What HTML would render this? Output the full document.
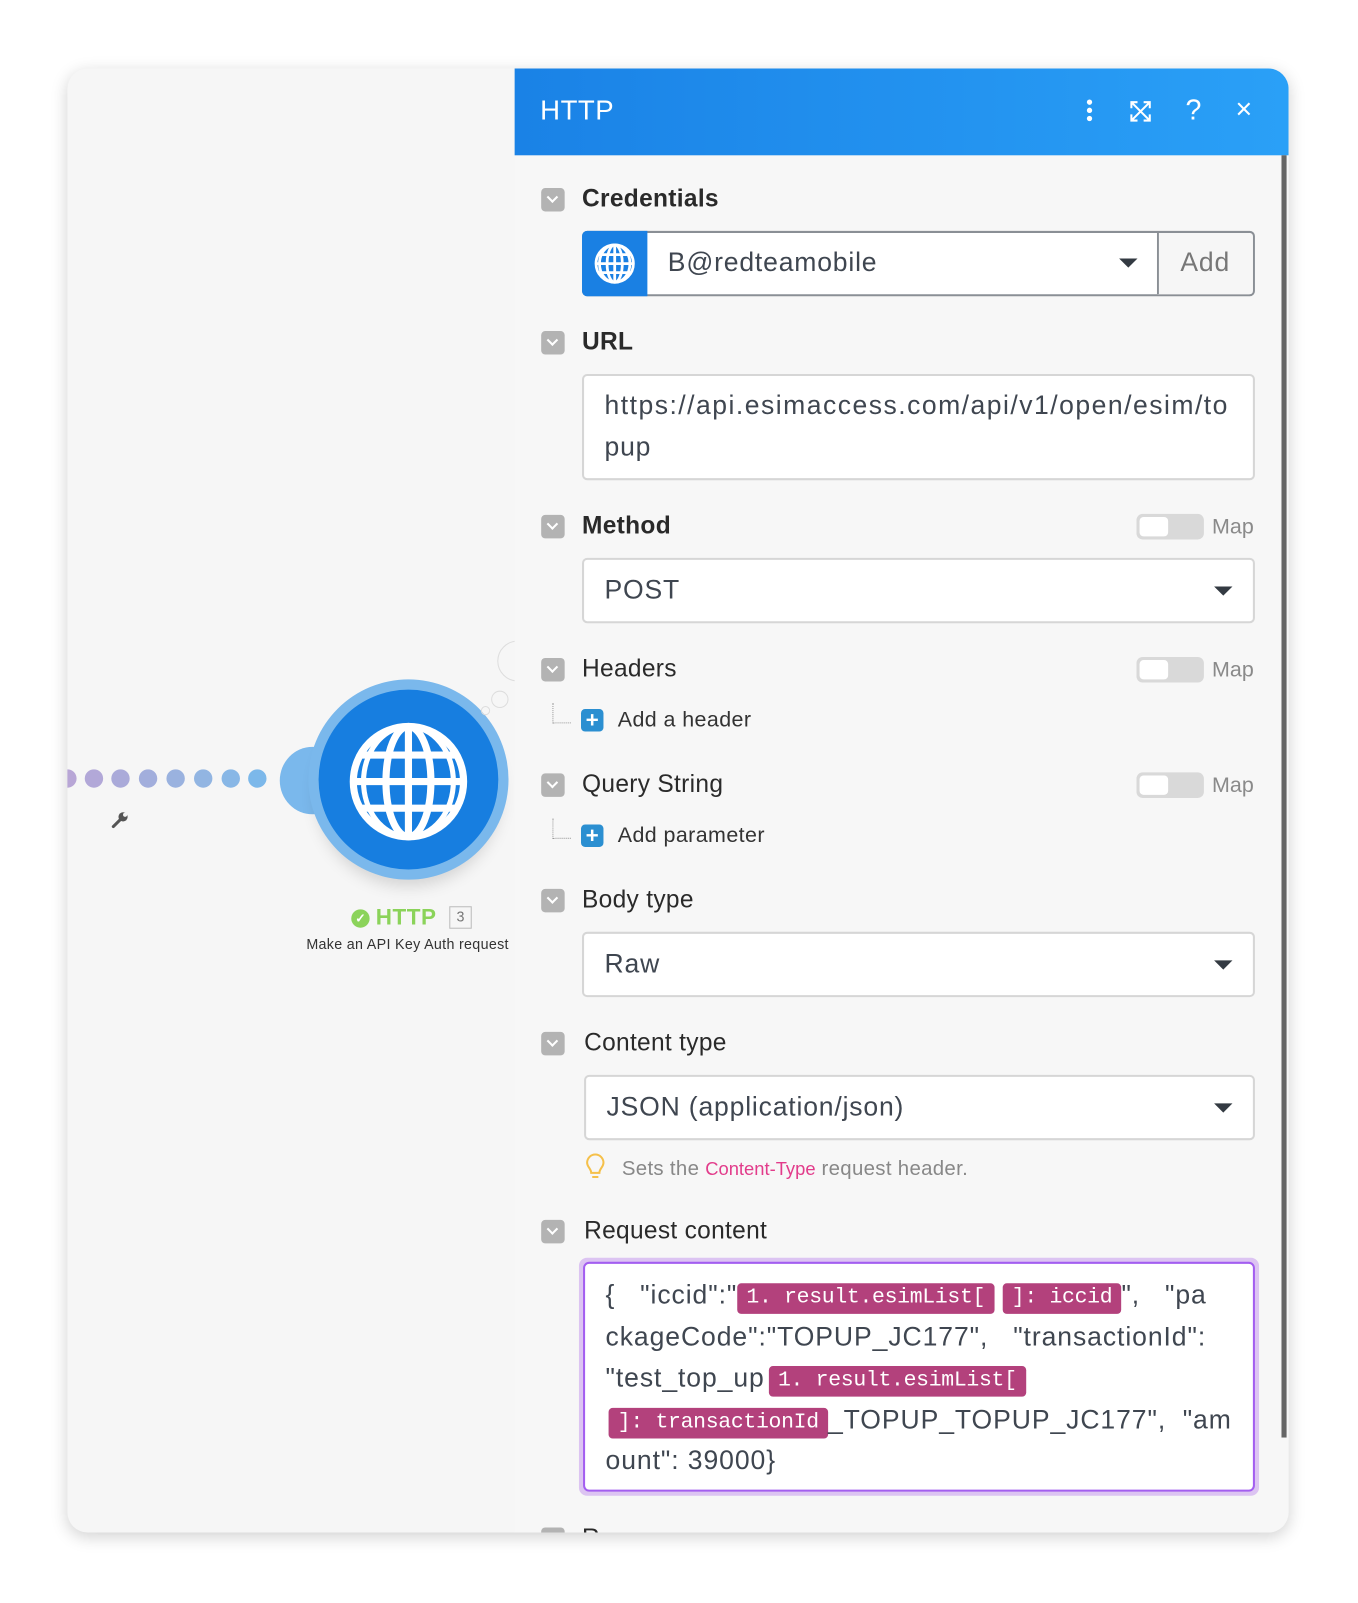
<!DOCTYPE html>
<html><head><meta charset="utf-8"><style>
*{margin:0;padding:0;box-sizing:border-box}
html,body{width:1358px;height:1602px;background:#fff;overflow:hidden;font-family:"Liberation Sans",sans-serif}
#w{position:absolute;left:0;top:0;width:1330px;height:1569px;transform:scale(1.0211,1.0217);transform-origin:0 0}
.a{position:absolute}
.card{left:66px;top:67px;width:1196px;height:1433px;border-radius:20px;background:#f6f6f6;box-shadow:0 4px 16px rgba(0,0,0,.18);overflow:hidden}
.panel{left:438px;top:0;width:758px;height:1433px;background:#f7f7f7}
.hdr{left:0;top:0;width:758px;height:85px;background:linear-gradient(90deg,#1a82e6,#2aa0f7)}
.cb{width:23px;height:23px;border-radius:4px;background:#b3b3b3}
.cb:after{content:"";position:absolute;left:7px;top:5px;width:6px;height:6px;border-right:2px solid #fff;border-bottom:2px solid #fff;transform:rotate(45deg)}
.lbl{font-size:24px;color:#2a2a2a;white-space:nowrap;letter-spacing:0.3px}
.b{font-weight:bold}
.inp{background:#fff;border:2px solid #d6d6d6;border-radius:5px}
.t{font-size:26px;color:#3f4650;white-space:nowrap;letter-spacing:0.8px}
.tri{width:0;height:0;border-left:9px solid transparent;border-right:9px solid transparent;border-top:9px solid #333a42}
.tog{width:66px;height:25px;border-radius:6px;background:#d9d9d9}
.tog:after{content:"";position:absolute;left:3px;top:3px;width:28px;height:19px;border-radius:4px;background:#fff}
.map{font-size:21px;color:#8a8a8a}
.plus{width:22px;height:22px;border-radius:4px;background:#2b8fd1;color:#fff;font-size:22px;line-height:21px;text-align:center;font-weight:bold}
.tree{width:18px;height:20px;border-left:1px dotted #999;border-bottom:1px dotted #999}
.pill{background:#b3417c;color:#fff;font-family:"Liberation Mono",monospace;font-size:21px;border-radius:4px;padding:0 9px;display:inline-block;line-height:30px;vertical-align:1px;letter-spacing:-0.3px}
.code{font-size:26px;color:#3f4650;line-height:40.5px;white-space:nowrap;letter-spacing:0.9px}
.dot{width:18px;height:18px;border-radius:50%;top:686px}
</style></head><body><div id="w">
<div class="a card">
  <div class="a dot" style="left:-9px;background:#b8a6d6"></div>
  <div class="a dot" style="left:17px;background:#b2a8d8"></div>
  <div class="a dot" style="left:43px;background:#aaaad9"></div>
  <div class="a dot" style="left:70px;background:#a2aedc"></div>
  <div class="a dot" style="left:97px;background:#9ab2df"></div>
  <div class="a dot" style="left:124px;background:#92b5e2"></div>
  <div class="a dot" style="left:151px;background:#88b7e6"></div>
  <div class="a dot" style="left:177px;background:#7cb8ea"></div>
  <svg class="a" style="left:42px;top:725px" width="20" height="20" viewBox="0 0 20 20"><path d="M3 17 L10 10" stroke="#555" stroke-width="3" stroke-linecap="round"/><circle cx="12.5" cy="7.5" r="4.5" fill="#555"/><circle cx="14.5" cy="5.5" r="2" fill="#f6f6f6"/></svg>
  <div class="a" style="left:208px;top:664px;width:64px;height:66px;border-radius:50%;background:#7ab8ec"></div>
  <div class="a" style="left:236px;top:598px;width:196px;height:196px;border-radius:50%;background:#7ab8ec;box-shadow:0 14px 16px -8px rgba(0,0,0,.15)"></div>
  <div class="a" style="left:246px;top:608px;width:176px;height:176px;border-radius:50%;background:#177ee0"></div>
  <svg class="a" style="left:275px;top:639px" width="118" height="118" viewBox="0 0 118 118" fill="none" stroke="#fff" stroke-width="7"><circle cx="59" cy="59" r="54"/><ellipse cx="59" cy="59" rx="22" ry="54"/><ellipse cx="59" cy="59" rx="44" ry="54" stroke-width="5"/><line x1="59" y1="5" x2="59" y2="113"/><line x1="5" y1="59" x2="113" y2="59"/><line x1="13" y1="33" x2="105" y2="33"/><line x1="13" y1="85" x2="105" y2="85"/></svg>
  <div class="a" style="left:421px;top:560px;width:40px;height:40px;border-radius:50%;border:1.5px solid #ddd"></div>
  <div class="a" style="left:415px;top:609px;width:17px;height:17px;border-radius:50%;border:1.5px solid #ddd"></div>
  <div class="a" style="left:405px;top:624px;width:9px;height:9px;border-radius:50%;border:1.5px solid #ddd"></div>
  <div class="a" style="left:278px;top:823px;width:18px;height:18px;border-radius:50%;background:#8bd35a;color:#fff;font-size:12px;text-align:center;line-height:18px;font-weight:bold">✓</div>
  <div class="a" style="left:302px;top:818px;font-size:22px;font-weight:bold;color:#8bd35a;letter-spacing:0.5px">HTTP</div>
  <div class="a" style="left:374px;top:820px;width:22px;height:22px;border:1.5px solid #bbb;font-size:14px;color:#777;text-align:center;line-height:19px">3</div>
  <div class="a" style="left:234px;top:849px;font-size:14px;color:#333;white-space:nowrap;letter-spacing:0.3px">Make an API Key Auth request</div>

  <div class="a panel">
    <div class="a hdr">
      <div class="a" style="left:25px;top:26px;font-size:27px;color:#fff;letter-spacing:0.5px">HTTP</div>
      <svg class="a" style="left:557px;top:28px" width="12" height="28"><circle cx="6" cy="5" r="2.6" fill="#fff"/><circle cx="6" cy="13" r="2.6" fill="#fff"/><circle cx="6" cy="21" r="2.6" fill="#fff"/></svg>
      <svg class="a" style="left:602px;top:31px" width="22" height="22" viewBox="0 0 22 22" fill="none" stroke="#fff" stroke-width="2"><path d="M2 2L20 20M20 2L2 20M2 8V2H8M14 2H20V8M20 14V20H14M8 20H2V14"/></svg>
      <div class="a" style="left:657px;top:25px;font-size:28px;color:#fff">?</div>
      <div class="a" style="left:706px;top:24px;font-size:28px;color:#fff">×</div>
    </div>
    <div class="a" style="left:751px;top:85px;width:5px;height:1255px;background:#666"></div>

    <div class="a cb" style="left:26px;top:117px"></div>
    <div class="a lbl b" style="left:66px;top:114px">Credentials</div>
    <div class="a inp" style="left:66px;top:159px;width:659px;height:64px;border-color:#8a8f95"></div>
    <div class="a" style="left:66px;top:159px;width:64px;height:64px;background:#1a80e3;border-radius:5px 0 0 5px"></div>
    <svg class="a" style="left:78px;top:171px" width="40" height="40" viewBox="0 0 118 118" fill="none" stroke="#fff" stroke-width="8"><circle cx="59" cy="59" r="54"/><ellipse cx="59" cy="59" rx="22" ry="54"/><ellipse cx="59" cy="59" rx="44" ry="54"/><line x1="59" y1="5" x2="59" y2="113"/><line x1="5" y1="59" x2="113" y2="59"/><line x1="13" y1="33" x2="105" y2="33"/><line x1="13" y1="85" x2="105" y2="85"/></svg>
    <div class="a" style="left:629px;top:161px;width:94px;height:60px;background:#f6f6f6;border-left:2px solid #8a8f95;border-radius:0 4px 4px 0"></div>
    <div class="a t" style="left:150px;top:174px">B@redteamobile</div>
    <div class="a tri" style="left:592px;top:186px"></div>
    <div class="a t" style="left:652px;top:174px;color:#777">Add</div>

    <div class="a cb" style="left:26px;top:257px"></div>
    <div class="a lbl b" style="left:66px;top:254px">URL</div>
    <div class="a inp" style="left:66px;top:299px;width:659px;height:104px"></div>
    <div class="a t" style="left:88px;top:314px;letter-spacing:1.45px">https://api.esimaccess.com/api/v1/open/esim/to</div>
    <div class="a t" style="left:88px;top:355px">pup</div>

    <div class="a cb" style="left:26px;top:437px"></div>
    <div class="a lbl b" style="left:66px;top:434px">Method</div>
    <div class="a tog" style="left:609px;top:436px"></div>
    <div class="a map" style="left:683px;top:437px">Map</div>
    <div class="a inp" style="left:66px;top:479px;width:659px;height:64px"></div>
    <div class="a t" style="left:88px;top:495px">POST</div>
    <div class="a tri" style="left:685px;top:507px"></div>

    <div class="a cb" style="left:26px;top:577px"></div>
    <div class="a lbl" style="left:66px;top:574px">Headers</div>
    <div class="a tog" style="left:609px;top:576px"></div>
    <div class="a map" style="left:683px;top:577px">Map</div>
    <div class="a tree" style="left:37px;top:621px"></div>
    <div class="a plus" style="left:65px;top:627px">+</div>
    <div class="a" style="left:101px;top:626px;font-size:21px;color:#333;letter-spacing:0.4px">Add a header</div>

    <div class="a cb" style="left:26px;top:690px"></div>
    <div class="a lbl" style="left:66px;top:687px">Query String</div>
    <div class="a tog" style="left:609px;top:689px"></div>
    <div class="a map" style="left:683px;top:690px">Map</div>
    <div class="a tree" style="left:37px;top:734px"></div>
    <div class="a plus" style="left:65px;top:740px">+</div>
    <div class="a" style="left:101px;top:739px;font-size:21px;color:#333;letter-spacing:0.4px">Add parameter</div>

    <div class="a cb" style="left:26px;top:803px"></div>
    <div class="a lbl" style="left:66px;top:800px">Body type</div>
    <div class="a inp" style="left:66px;top:845px;width:659px;height:64px"></div>
    <div class="a t" style="left:88px;top:861px">Raw</div>
    <div class="a tri" style="left:685px;top:873px"></div>

    <div class="a cb" style="left:26px;top:943px"></div>
    <div class="a lbl" style="left:68px;top:940px">Content type</div>
    <div class="a inp" style="left:68px;top:985px;width:657px;height:64px"></div>
    <div class="a t" style="left:90px;top:1001px">JSON (application/json)</div>
    <div class="a tri" style="left:685px;top:1013px"></div>
    <svg class="a" style="left:68px;top:1062px" width="22" height="28" viewBox="0 0 22 28" fill="none" stroke="#f5c04a" stroke-width="2"><path d="M7 19C7 15 3 13 3 9A8 8 0 0 1 19 9C19 13 15 15 15 19Z"/><path d="M8 23H14"/></svg>
    <div class="a" style="left:105px;top:1066px;font-size:20px;color:#888;white-space:nowrap;letter-spacing:0.3px">Sets the <span style="color:#e23c8b;font-size:18px;letter-spacing:0">Content-Type</span> request header.</div>

    <div class="a cb" style="left:26px;top:1127px"></div>
    <div class="a lbl" style="left:68px;top:1124px">Request content</div>
    <div class="a" style="left:63px;top:1164px;width:666px;height:233px;border-radius:8px;background:#dcc4f2"></div>
    <div class="a" style="left:67px;top:1168px;width:658px;height:225px;border-radius:6px;background:#fff;border:2px solid #a35ef0"></div>
    <div class="a code" style="left:89px;top:1180px">{&nbsp;&nbsp;&nbsp;"iccid":"<span class="pill">1. result.esimList[</span> <span class="pill">]: iccid</span>",&nbsp;&nbsp;&nbsp;"pa<br>ckageCode":"TOPUP_JC177",&nbsp;&nbsp;&nbsp;"transactionId":<br>"test_top_up<span class="pill" style="margin-left:4px">1. result.esimList[</span><br><span class="pill" style="margin-left:3px">]: transactionId</span>_TOPUP_TOPUP_JC177",&nbsp;&nbsp;"am<br>ount": 39000}</div>

    <div class="a cb" style="left:26px;top:1428px"></div>
    <div class="a lbl" style="left:66px;top:1425px">R</div>
  </div>
</div>
</div></body></html>
